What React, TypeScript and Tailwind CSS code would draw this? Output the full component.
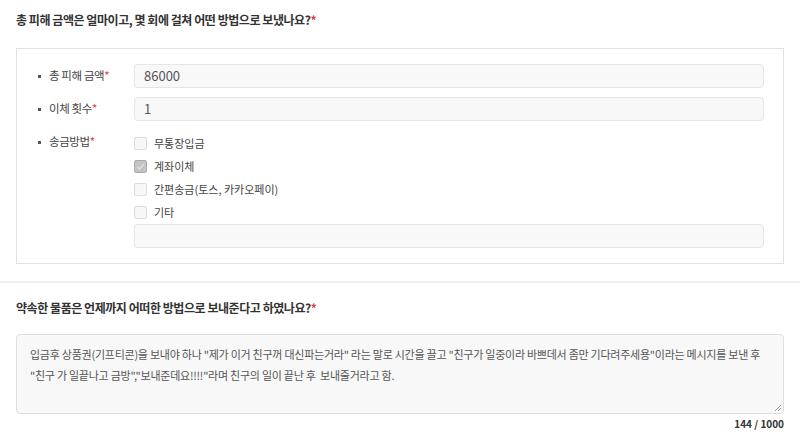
import React from "react";

const font = { fontFamily: '"Noto Sans CJK KR", "Noto Sans", sans-serif' };

function Req() {
  return <span className="text-[#e53935]">*</span>;
}

function Label({ children }: { children: React.ReactNode }) {
  return (
    <div className="w-[97px] shrink-0 flex items-center text-[11.5px] tracking-[-0.4px] text-[#444] h-[24px]">
      <span className="w-[3px] h-[3px] bg-[#555] ml-[1px] mr-[8px]" />
      <span>{children}</span>
      <Req />
    </div>
  );
}

function Box({ checked }: { checked?: boolean }) {
  return checked ? (
    <span className="w-[13px] h-[13px] rounded-[2px] bg-[#c4c4c4] border border-[#aaa] flex items-center justify-center">
      <svg width="9" height="9" viewBox="0 0 10 10">
        <path d="M1.5 5.2 L4 7.6 L8.6 2.3" fill="none" stroke="#e6e6e6" strokeWidth="1.4" />
      </svg>
    </span>
  ) : (
    <span className="w-[13px] h-[13px] rounded-[2px] bg-[#f7f7f7] border border-[#dcdcdc]" />
  );
}

export default function App() {
  const options: [string, boolean][] = [
    ["무통장입금", false],
    ["계좌이체", true],
    ["간편송금(토스, 카카오페이)", false],
    ["기타", false],
  ];
  return (
    <div className="w-[800px] h-[445px] bg-white overflow-hidden" style={font}>
      <div className="px-4 pt-[10px] pb-[17px]">
        <div className="text-[12px] tracking-[-0.45px] font-bold text-[#333] leading-[20px]">
          총 피해 금액은 얼마이고, 몇 회에 걸쳐 어떤 방법으로 보냈나요?<Req />
        </div>
        <div className="mt-[18px] border border-[#e3e3e3] pl-[20px] pr-[19px] pt-[15px] pb-[15px] flex flex-col gap-[9px]">
          <div className="flex">
            <Label>총 피해 금액</Label>
            <div className="flex-1 h-[24px] rounded-[4px] bg-[#f8f8f8] border border-[#e6e6e6] px-[9px] flex items-center text-[13px] text-[#555]">
              86000
            </div>
          </div>
          <div className="flex">
            <Label>이체 횟수</Label>
            <div className="flex-1 h-[24px] rounded-[4px] bg-[#f8f8f8] border border-[#e6e6e6] px-[9px] flex items-center text-[13px] text-[#555]">
              1
            </div>
          </div>
          <div className="flex">
            <Label>송금방법</Label>
            <div className="flex-1 flex flex-col pt-[2px]">
              {options.map(([t, c]) => (
                <div key={t} className="h-[23px] flex items-center gap-[7px] text-[11px] text-[#444]">
                  <Box checked={c} />
                  <span>{t}</span>
                </div>
              ))}
              <div className="h-[24px] rounded-[4px] bg-[#f8f8f8] border border-[#e6e6e6]" />
            </div>
          </div>
        </div>
      </div>
      <div className="h-[2px] bg-[#efefef]" />
      <div className="px-4 pt-[15px]">
        <div className="text-[12px] tracking-[-0.45px] font-bold text-[#333] leading-[20px]">
          약속한 물품은 언제까지 어떠한 방법으로 보내준다고 하였나요?<Req />
        </div>
        <div className="mt-[16px] relative h-[80px] rounded-[4px] bg-[#f8f8f8] border border-[#dedede] px-[13px] pt-[9px] text-[11px] tracking-[-0.25px] leading-[21px] text-[#555] whitespace-nowrap">
          입금후 상품권(기프티콘)을 보내야 하나 "제가 이거 친구꺼 대신파는거라" 라는 말로 시간을 끌고 "친구가 일중이라 바쁘데서 좀만 기다려주세용"이라는 메시지를 보낸 후
          <br />
          "친구 가 일끝나고 금방","보내준데요!!!!"라며 친구의 일이 끝난 후&nbsp; 보내줄거라고 함.
          <svg className="absolute right-[1px] bottom-[1px]" width="8" height="8" viewBox="0 0 8 8">
            <path d="M7 1 L1 7 M7 4 L4 7" stroke="#999" strokeWidth="1" />
          </svg>
        </div>
        <div className="text-right text-[10px] text-[#333] mt-[3px] leading-[14px] font-semibold">144 / 1000</div>
      </div>
    </div>
  );
}
